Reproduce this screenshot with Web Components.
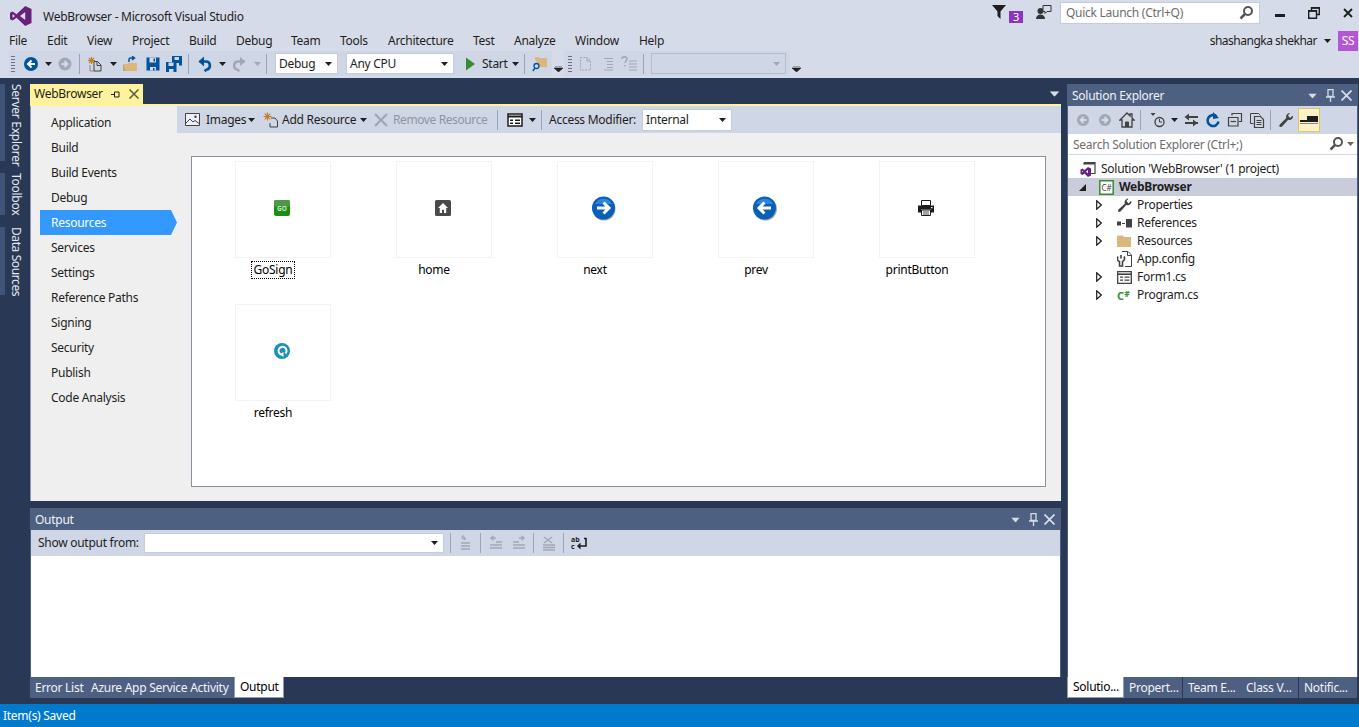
<!DOCTYPE html>
<html lang="en">
<head>
<meta charset="utf-8">
<title>WebBrowser - Microsoft Visual Studio</title>
<style>
html, body { margin: 0; padding: 0; height: 100%; overflow: hidden; }
body { font: 12px/16px "Noto Sans", "Open Sans", sans-serif; letter-spacing: -0.27px; color: #1e1e1e; background: #293955; }
</style>
</head>
<body>
<vs-app></vs-app>
<script>
// [width, height, svg content]
const ICONS = {
  caret: [7, 4, '<path d="M0 0h7L3.5 4z" fill="currentColor"/>'],
  logo: [22, 20, '<path fill-rule="evenodd" fill="#68217a" d="M15.2 0 21.5 3v14l-6.300 3-8.700-8.300L2.600 14.600 0 13.300V6.700l2.600-1.300 3.900 2.900zM2.600 7.900v4.200L5 10zM15.200 6 10 10l5.200 4z"/>'],
  filter: [14, 14, '<path d="M0 0h14L8.500 6.500V14L5.500 11V6.500z" fill="#1e1e1e"/>'],
  feedback: [16, 16, '<circle cx="4.500" cy="7" r="3" fill="#333"/><path d="M0 15c0-3 2-4.500 4.500-4.500S9 12 9 15z" fill="#333"/><path d="M7 1.500h8v6h-4l-2 2v-2H7z" fill="#d6dbe9" stroke="#333"/>'],
  search: [16, 16, '<circle cx="10" cy="6" r="4" fill="none" stroke="#555" stroke-width="2"/><path d="M7 9 2.500 13.500" stroke="#555" stroke-width="2.500"/>'],
  min: [10, 10, '<path d="M0 6h10v3H0z" fill="#1e1e1e"/>'],
  restore: [12, 12, '<path d="M3.500 3V.7h7.800v6.800H8.500M.7 3.700h7.800v7.600H.7z" fill="none" stroke="#1e1e1e" stroke-width="1.400"/><path d="M3.500 1h8M1 4h7" stroke="#1e1e1e" stroke-width="1.400"/>'],
  close: [10, 10, '<path d="M1 1l8 8M9 1 1 9" stroke="#1e1e1e" stroke-width="1.800"/>'],
  back: [16, 16, '<circle cx="8" cy="8" r="7" fill="#00539c"/><path d="M12 8H5.500M8.500 4.500 5 8l3.500 3.500" fill="none" stroke="#fff" stroke-width="2"/>'],
  forward: [16, 16, '<circle cx="8" cy="8" r="6.500" fill="#a3a8b4"/><path d="M4.500 8H10M7.500 5 10.500 8 7.500 11" fill="none" stroke="#d6dbe9" stroke-width="1.800"/>'],
  backoff: [16, 16, '<circle cx="8" cy="8" r="6" fill="#a3a8b4"/><path d="M11.500 8H6M8.500 5 5.500 8l3 3" fill="none" stroke="#d6dbe9" stroke-width="1.800"/>'],
  forwardoff: [16, 16, '<circle cx="8" cy="8" r="6" fill="#a3a8b4"/><path d="M4.500 8H10M7.500 5 10.500 8 7.500 11" fill="none" stroke="#d6dbe9" stroke-width="1.800"/>'],
  newproj: [16, 16, '<path d="M7 5.500h3.500L14 9v6H7z" fill="none" stroke="#424242"/><path d="M10 6v3.500h4" fill="none" stroke="#424242"/><path d="M4.500 1v7M1 4.500h7M2 2l5 5M7 2 2 7" stroke="#c27d1a" stroke-width="1.100"/><path d="M3 9.500v5.500h4" fill="none" stroke="#424242" stroke-dasharray="1 1"/>'],
  open: [16, 16, '<path d="M1 8h4l1-1h9v8H3z" fill="#dcb67a"/><path d="M1 8v7h3" fill="#c9a565"/><path d="M7 6V3.500c0-1 .6-1.500 1.600-1.500H12M10 .2 12.500 2 10 4" fill="none" stroke="#00539c" stroke-width="1.500"/>'],
  save: [16, 16, '<path d="M1.500 1.500h13v13h-13z" fill="#00539c"/><path d="M4.500 1.500h6.500v5H4.500zM5 11h6v3.500H5z" fill="#d6dbe9"/><path d="M8.500 2.500h1.500v3H8.500zM8 12h1.500v2.500H8z" fill="#00539c"/>'],
  saveall: [16, 16, '<path d="M6 0h10v9.500H13V7H6z" fill="#00539c"/><path d="M8.500 1h4.500v3H8.500z" fill="#cfd6e5"/><path d="M0 6h10.500v10H0z" fill="#00539c"/><path d="M2.500 6.500h5v3.500h-5zM3 13h4.500v3H3z" fill="#cfd6e5"/>'],
  undo: [16, 16, '<path d="M2.500 5.500H9c5 0 5 7 1 8l-2.500 1.500" fill="none" stroke="#00539c" stroke-width="2.600"/><path d="M7 .5 1.500 5.500 7 10.500z" fill="#00539c"/>'],
  redo: [16, 16, '<path d="M13.500 5.500H7c-5 0-5 7-1 8l2.500 1.500" fill="none" stroke="#a3a8b4" stroke-width="2.400"/><path d="M9 1l5.500 4.500L9 10z" fill="#a3a8b4"/>'],
  play: [16, 16, '<path d="M4 1.500l9 6.500-9 6.500z" fill="#388a34"/>'],
  find: [16, 16, '<path d="M3 4V1h3.500l1 1H15v9H6c0-4-1-6-3-7z" fill="#dcb67a"/><circle cx="4.500" cy="10" r="2.500" fill="#cfd6e5" stroke="#00539c" stroke-width="1.300"/><path d="M3 12 .8 15" stroke="#00539c" stroke-width="1.500"/>'],
  doc: [16, 16, '<path d="M3.500 1.500h7l3 3v9.500h-10z" fill="none" stroke="#a3a8b4" stroke-dasharray="2 1"/><path d="M10 2v3h3" fill="none" stroke="#a3a8b4"/>'],
  outdent: [16, 16, '<path d="M5 2.500h9M8 5.500h6M8 8.500h6M8 11.500h6M5 14h9" stroke="#a3a8b4" stroke-width="1.200"/>'],
  comment: [16, 16, '<path d="M1 3c0-3 5-3 5 0 0 2-2 2-2 4M4 9v1.500" fill="none" stroke="#a3a8b4" stroke-width="1.500"/><path d="M8 5h8M8 8h8M8 11h8M8 14h8" stroke="#a3a8b4" stroke-width="1.200"/>'],
  image: [16, 14, '<path d="M.5.500h14v12H.5z" fill="#eef0f6" stroke="#424242"/><path d="M1 10l4-4 3 3 2-1.500 4 3" fill="none" stroke="#424242"/><circle cx="10.500" cy="3.800" r="1.200" fill="#424242"/>'],
  addres: [16, 16, '<path d="M8 6h4l2.500 3v6H7v-4" fill="none" stroke="#424242"/><path d="M4.500 .5v8M.5 4.500h8M1.700 1.700l5.600 5.600M7.300 1.700 1.700 7.300" stroke="#c27d1a" stroke-width="1.100"/>'],
  xoff: [14, 14, '<path d="M1 1l12 12M13 1 1 13" stroke="#a3a8b4" stroke-width="2.400"/>'],
  views: [16, 14, '<path d="M1 1h14v12H1z" fill="#fff" stroke="#1e1e1e" stroke-width="1.500"/><path d="M1 3.500h14" stroke="#1e1e1e" stroke-width="2"/><path d="M3 6.500h3v1.500H3zM3 9.500h3V11H3zM8 6.500h5v1.500H8zM8 9.500h5V11H8z" fill="#1e1e1e"/>'],
  pin: [9, 9, '<path d="M0 4.500h3M3.500 2v5h4.500V2zM3.500 3v3" fill="none" stroke="#1e1e1e"/>'],
  tabclose: [10, 10, '<path d="M.5.500l9 9M9.500.500l-9 9" stroke="#5a5a3c" stroke-width="1.500"/>'],
  wcaret: [11, 6, '<path d="M0 0h11L5.500 6z" fill="#d6dbe9"/>'],
  wpin: [9, 13, '<path d="M2 .5h5v7H2zM0 8h9M4.500 8v5" fill="none" stroke="#d6dbe9" stroke-width="1.300"/>'],
  wclose: [11, 11, '<path d="M.5.500l10 10M10.500.500l-10 10" stroke="#d6dbe9" stroke-width="1.800"/>'],
  home: [16, 16, '<path d="M8 1 1 8h2v7h10V8h2l-2-2V2h-2v2z" fill="none" stroke="#424242" stroke-width="1.300"/><path d="M6.500 15v-5h3v5" fill="#424242" stroke="#424242"/>'],
  clock: [16, 16, '<circle cx="9.500" cy="10" r="4.500" fill="none" stroke="#424242" stroke-width="1.300"/><path d="M9.500 7v3h2.500" fill="none" stroke="#424242"/><path d="M.5 1h5L3 4z" fill="#424242"/>'],
  sync: [16, 16, '<path d="M15 5H5M15 11H2" stroke="#424242" stroke-width="1.800"/><path d="M6 1.500 1.500 5 6 8.500zM10 7.500 14.500 11 10 14.500z" fill="#424242"/>'],
  refresh: [16, 16, '<path d="M11.500 4.200A5.500 5.500 0 1 0 13.500 9.500" fill="none" stroke="#00539c" stroke-width="2.600"/><path d="M8 0v7l6-1z" fill="#00539c"/>'],
  collapse: [16, 16, '<path d="M5 3.500V1.500h9.500v8H12M1.500 5.500h9.500v8.500H1.500z" fill="none" stroke="#424242" stroke-width="1.200"/><path d="M3.500 9.500h5.500" stroke="#424242" stroke-width="1.200"/>'],
  copies: [16, 16, '<path d="M1.500 1.500h8l2 2M1.500 1.500v10h3" fill="none" stroke="#424242"/><path d="M5.500 4.500h6l3 3v8h-9z" fill="none" stroke="#424242" stroke-width="1.200"/><path d="M7.500 8.500h5M7.500 10.500h5M7.500 12.500h5" stroke="#424242"/>'],
  wrench: [16, 16, '<path d="M15 4.500c0 2.500-2.500 4-4.800 3.200L4 14.500c-2 1.500-3.500-.5-2.200-2L8.300 6C7.500 3.500 9.500 1 12 1l-2 2.500L12 6l2.500-2.200z" fill="#424242"/>'],
  pane: [18, 8, '<path d="M7 0h11v6H7zM0 4h7v2H0z" fill="#1e1e1e"/><path d="M0 7h18v1H0z" fill="#888"/>'],
  solution: [16, 16, '<path d="M4 1.500h11v11h-4M4 1.500v2" fill="none" stroke="#424242" stroke-width="1.200"/><path d="M4 1.500h11v2H4z" fill="#424242"/><path fill-rule="evenodd" fill="#68217a" d="M8 6l3 1.500v7L8 16l-3.500-3.500L2.500 14 .5 13V8.500l2-1 2 1.500zM2.300 9.500v2l1-1zM8 9 6 10.500 8 12.500z"/>'],
  csproj: [15, 15, '<path d="M.8.800h13.400v13.400H.8z" fill="#fff" stroke="#388a34" stroke-width="1.500"/><text x="7.500" y="10.500" text-anchor="middle" font-size="8" font-weight="400" letter-spacing="0" fill="#424242">C#</text>'],
  treeprops: [15, 15, '<path d="M14.500 3.500c0 3-3 4.500-5.300 3.500L3.500 13.500c-1.800 1.300-3.200-.3-2-2L7.800 5.800C7 3 9 .5 11.500.5L9.500 3l2 2.500L14 3z" fill="#424242"/>'],
  refs: [15, 9, '<path d="M0 2.500h4v4H0zM9 0h6v8.500H9z" fill="#424242"/><path d="M5 4.500h3" stroke="#424242"/>'],
  folder: [14, 12, '<path d="M0 1.500 1 .5h5l1 1.500h7v10H0z" fill="#dcb67a"/>'],
  config: [15, 16, '<path d="M5 .5h6l3.500 3.500v11.500H8" fill="none" stroke="#424242"/><path d="M10.500 1v3.500H14" fill="none" stroke="#424242"/><path d="M4 4v3.500M1 5.500c-1.500 3 .5 5 1.500 5V15h3v-4.500c1-.3 3-2.500 1.500-5" fill="none" stroke="#424242" stroke-width="1.600"/>'],
  form: [15, 13, '<path d="M.7.700h13.600v11.600H.7z" fill="#fff" stroke="#424242" stroke-width="1.300"/><path d="M1 3.200h13" stroke="#424242" stroke-width="1.600"/><path d="M3 5.500h3v1.300H3zM3 8.500h3v1.300H3zM7.500 5.500h5v1.300h-5zM7.500 8.500h5v1.300h-5z" fill="#424242"/>'],
  cs: [15, 14, '<text x="0" y="12" font-size="11" font-weight="700" letter-spacing="0" fill="#388a34">C</text><text x="7.500" y="9" font-size="8" font-weight="700" letter-spacing="0" fill="#388a34">#</text>'],
  arrowopen: [7, 7, '<path d="M7 0v7H0z" fill="#1e1e1e"/>'],
  arrowclosed: [6, 10, '<path d="M.7.800 5.300 5 .7 9.200z" fill="#fff" stroke="#1e1e1e" stroke-width="1.200"/>'],
  overflow: [9, 6, '<path d="M1 0h7M0 2h9l-4.500 4z" fill="#1e1e1e" stroke="#1e1e1e" stroke-width=".6"/>'],
  clearfind: [16, 16, '<path d="M6 1c-3 0-2 3 0 3h2M7 2 5 4M3 8h9M3 11h9M3 14h9" fill="none" stroke="#a3a8b4" stroke-width="1.400"/>'],
  prevmsg: [16, 16, '<path d="M8 3H3M5.500 .8 3 3l2.500 2.200M8 7h6M2 10h12M2 13h12" fill="none" stroke="#a3a8b4" stroke-width="1.400"/>'],
  nextmsg: [16, 16, '<path d="M8 3h5M10.500 .8 13 3l-2.500 2.200M2 7h6M2 10h12M2 13h12" fill="none" stroke="#a3a8b4" stroke-width="1.400"/>'],
  clearall: [16, 16, '<path d="M3 2l8 6M11 2 3 8M2 10h12M2 12.500h12M2 15h12" stroke="#a3a8b4" stroke-width="1.400"/>'],
  wrap: [16, 16, '<text x="0" y="7" font-size="7" font-weight="700" letter-spacing="0" fill="#1e1e1e">ab</text><text x="0" y="14" font-size="7" font-weight="700" letter-spacing="0" fill="#1e1e1e">c</text><path d="M13 3.500h2v7.500H8" fill="none" stroke="#1e1e1e" stroke-width="1.600"/><path d="M9.500 7.500 6 11l3.500 3.500z" fill="#1e1e1e"/>'],
  go: [16, 16, '<rect width="16" height="16" rx="2" fill="#1e8e12"/><rect width="16" height="7" rx="2" fill="#4c9a43"/><text x="8" y="10.500" text-anchor="middle" font-size="6.500" font-weight="700" letter-spacing="0" fill="#cfe8cc">GO</text>'],
  reshome: [16, 16, '<rect width="16" height="16" rx="1.500" fill="#4a4a4a"/><path d="M8 3 3 8h1.800v5h2.200V9.800h2V13h2.200V8H13z" fill="#fff"/>'],
  resnext: [24, 25, '<circle cx="12" cy="13" r="11.500" fill="#666" opacity=".55"/><circle cx="11.500" cy="12" r="11.500" fill="#0a5fb8"/><path d="M3 8a9.500 9.500 0 0 1 17 0z" fill="#2d87dc"/><path d="M5 12h12M11.500 6.500 17 12l-5.500 5.500" fill="none" stroke="#fff" stroke-width="3"/>'],
  resprev: [24, 25, '<circle cx="12.500" cy="13" r="11.500" fill="#666" opacity=".55"/><circle cx="11.500" cy="12" r="11.500" fill="#0a5fb8"/><path d="M3 8a9.500 9.500 0 0 1 17 0z" fill="#2d87dc"/><path d="M18 12H6M11.500 6.500 6 12l5.500 5.500" fill="none" stroke="#fff" stroke-width="3"/>'],
  resprint: [16, 16, '<path d="M3.500 .5h9v5h-9z" fill="#fff" stroke="#1a1a1a"/><path d="M0 5.500h16v7h-3v-3H3v3H0z" fill="#1a1a1a"/><path d="M3.500 10h9v5.500h-9z" fill="#fff" stroke="#1a1a1a"/><path d="M5 12h6M5 14h6" stroke="#1a1a1a" stroke-width=".8"/><path d="M13 7h1.500v1.200H13z" fill="#fff"/>'],
  resrefresh: [16, 16, '<circle cx="8" cy="8" r="8" fill="#1a8fb8"/><path d="M11.500 10.500A4 4 0 1 0 7 11.500" fill="none" stroke="#fff" stroke-width="2"/><path d="M9.500 9v5l-4-2.500z" fill="#fff"/>']
};

class VsIcon extends HTMLElement {
  constructor() {
    super();
    const [w, h, body] = ICONS[this.getAttribute('name')];
    this.attachShadow({ mode: 'open' }).innerHTML =
      `<style>:host{display:inline-flex;flex:none;align-items:center;justify-content:center}svg{display:block}</style>
       <svg width="${w}" height="${h}" viewBox="0 0 ${w} ${h}">${body}</svg>`;
  }
}
customElements.define('vs-icon', VsIcon);

class VsCombo extends HTMLElement {
  constructor() {
    super();
    const disabled = this.hasAttribute('disabled');
    this.attachShadow({ mode: 'open' }).innerHTML = `
      <style>
      :host{display:flex;flex:none;align-items:center;box-sizing:border-box;height:21px;padding:0 5px 0 3px;
        background:${disabled ? '#cfd6e5' : '#fff'};border:1px solid ${disabled ? '#b4bccd' : '#c3cbdc'};
        color:${disabled ? '#a3a8b4' : '#1e1e1e'}}
      span{flex:1;white-space:nowrap}
      </style>
      <span><slot></slot></span><vs-icon name="caret"></vs-icon>`;
  }
}
customElements.define('vs-combo', VsCombo);

const BAR_CSS = `
  .sep{flex:none;width:1px;align-self:center;height:20px;background:#9aa2b5}
  .grip{flex:none;width:4px;height:17px;background-image:radial-gradient(#6a7389 .7px,transparent .8px);background-size:2px 3px}
  .off{color:#8f95a3;letter-spacing:-.4px}
  span{white-space:nowrap}
`;

class VsTitleBar extends HTMLElement {
  constructor() {
    super();
    this.attachShadow({ mode: 'open' }).innerHTML = `
      <style>
      :host{display:flex;align-items:center;height:30px;padding-left:10px;box-sizing:border-box}
      .name{margin-left:11px;flex:1;padding-top:4px}
      .badge{margin:3px 0 0 3px;width:14px;height:12px;background:#8a35c0;color:#fff;font-size:11px;line-height:12px;text-align:center}
      .quick{display:flex;align-items:center;box-sizing:border-box;width:200px;height:22px;margin:-5px 0 0 8px;padding:1px 5px 0;background:#fff;border:1px solid #c3cbdc;color:#6d6d6d}
      .quick span{flex:1}
      .btn{margin-top:-4px}
      </style>
      <vs-icon name="logo" style="margin-top:2px"></vs-icon>
      <span class="name">WebBrowser - Microsoft Visual Studio</span>
      <vs-icon name="filter" style="margin-top:-6px"></vs-icon>
      <span class="badge">3</span>
      <vs-icon name="feedback" style="margin:-6px 0 0 13px"></vs-icon>
      <div class="quick"><span>Quick Launch (Ctrl+Q)</span><vs-icon name="search"></vs-icon></div>
      <vs-icon class="btn" name="min" style="margin-left:15px"></vs-icon>
      <vs-icon class="btn" name="restore" style="margin-left:23px"></vs-icon>
      <vs-icon class="btn" name="close" style="margin:-4px 6px 0 23px"></vs-icon>`;
  }
}
customElements.define('vs-title-bar', VsTitleBar);

class VsMenuBar extends HTMLElement {
  constructor() {
    super();
    const items = ['File','Edit','View','Project','Build','Debug','Team','Tools','Architecture','Test','Analyze','Window','Help'];
    this.attachShadow({ mode: 'open' }).innerHTML = `
      <style>
      :host{display:flex;align-items:center;height:21px;box-sizing:border-box}
      .menu{display:grid;grid-template-columns:38px 40px 45px 57px 47px 55px 49px 48px 85px 41px 61px 64px 40px;padding-left:9px;flex:1}
      .user{margin-right:7px;letter-spacing:-.5px}
      .ss{width:20px;height:20px;margin:0 1px 0 7px;background:#b455d6;color:#fff;text-align:center;line-height:20px}
      </style>
      <div class="menu">${items.map(i => `<span>${i}</span>`).join('')}</div>
      <span class="user">shashangka shekhar</span><vs-icon name="caret"></vs-icon><span class="ss">SS</span>`;
  }
}
customElements.define('vs-menu-bar', VsMenuBar);

class VsMainToolbar extends HTMLElement {
  constructor() {
    super();
    this.attachShadow({ mode: 'open' }).innerHTML = `
      <style>
      ${BAR_CSS}
      :host{display:flex;height:27px;padding-left:9px}
      .bar{display:flex;align-items:center;height:25px;background:#cfd6e5;box-sizing:border-box}
      .over{display:flex;justify-content:center;align-items:flex-end;padding-bottom:5px;box-sizing:border-box;height:26px}
      </style>
      <div class="bar" style="width:543px">
        <i class="grip" style="margin-left:2px"></i>
        <vs-icon name="back" style="margin-left:8px"></vs-icon>
        <vs-icon name="caret" style="margin-left:6px"></vs-icon>
        <vs-icon name="forward" style="margin-left:5px"></vs-icon>
        <i class="sep" style="margin-left:6px"></i>
        <vs-icon name="newproj" style="margin-left:7px"></vs-icon>
        <vs-icon name="caret" style="margin-left:7px"></vs-icon>
        <vs-icon name="open" style="margin-left:5px"></vs-icon>
        <vs-icon name="save" style="margin-left:7px"></vs-icon>
        <vs-icon name="saveall" style="margin-left:5px"></vs-icon>
        <i class="sep" style="margin-left:6px"></i>
        <vs-icon name="undo" style="margin-left:8px"></vs-icon>
        <vs-icon name="caret" style="margin-left:6px"></vs-icon>
        <vs-icon name="redo" style="margin-left:5px"></vs-icon>
        <vs-icon name="caret" style="margin-left:7px;color:#a3a8b4"></vs-icon>
        <i class="sep" style="margin-left:5px"></i>
        <vs-combo style="margin-left:8px;width:63px">Debug</vs-combo>
        <vs-combo style="margin-left:8px;width:108px">Any CPU</vs-combo>
        <vs-icon name="play" style="margin-left:8px"></vs-icon>
        <span style="margin-left:4px;width:26px">Start</span>
        <vs-icon name="caret" style="margin-left:4px"></vs-icon>
        <i class="sep" style="margin-left:5px"></i>
        <vs-icon name="find" style="margin-left:7px"></vs-icon>
      </div>
      <div class="over" style="width:12px"><vs-icon name="overflow"></vs-icon></div>
      <div class="bar" style="width:226px">
        <i class="grip" style="margin-left:4px"></i>
        <vs-icon name="doc" style="margin-left:5px"></vs-icon>
        <vs-icon name="outdent" style="margin-left:6px"></vs-icon>
        <vs-icon name="comment" style="margin-left:6px"></vs-icon>
        <i class="sep" style="margin-left:6px"></i>
        <vs-combo disabled style="margin-left:7px;width:135px"></vs-combo>
      </div>
      <div class="over" style="width:12px"><vs-icon name="overflow"></vs-icon></div>`;
  }
}
customElements.define('vs-main-toolbar', VsMainToolbar);

class VsRail extends HTMLElement {
  constructor() {
    super();
    this.attachShadow({ mode: 'open' }).innerHTML = `
      <style>
      :host{display:flex;flex-direction:column;gap:12px;color:#e4e9f3}
      div{display:flex;writing-mode:vertical-rl;box-sizing:border-box;width:30px;padding:0 3px 0 5px;box-shadow:inset 5px 0 0 #3f5478;white-space:nowrap;line-height:22px}
      </style>
      <div style="height:77px">Server Explorer</div>
      <div style="height:42px">Toolbox</div>
      <div style="height:68px;letter-spacing:-.4px">Data Sources</div>`;
  }
}
customElements.define('vs-rail', VsRail);

class VsDocTab extends HTMLElement {
  constructor() {
    super();
    this.attachShadow({ mode: 'open' }).innerHTML = `
      <style>
      :host{display:flex;align-items:center;height:20px;border-bottom:2px solid #fff29d}
      .tab{display:flex;align-items:center;height:20px;width:113px;box-sizing:border-box;padding-left:4px;background:#fff29d;color:#1e1e1e}
      .tab span{width:76px;white-space:nowrap}
      .end{margin-left:auto;margin-right:1px}
      </style>
      <div class="tab"><span><slot></slot></span><vs-icon name="pin" style="margin-left:1px"></vs-icon><vs-icon name="tabclose" style="margin-left:9px"></vs-icon></div>
      <vs-icon class="end" name="wcaret" style="transform:scale(.9)"></vs-icon>`;
  }
}
customElements.define('vs-doc-tab', VsDocTab);

class VsNavItem extends HTMLElement {
  constructor() {
    super();
    this.attachShadow({ mode: 'open' }).innerHTML = `
      <style>
      :host{display:flex;align-items:center;height:25px;width:137px;box-sizing:border-box;padding:1px 0 0 11px}
      :host([active]){color:#fff;background:#3399ff;clip-path:polygon(0 0,131px 0,137px 50%,131px 100%,0 100%)}
      </style>
      <slot></slot>`;
  }
}
customElements.define('vs-nav-item', VsNavItem);

class VsNavList extends HTMLElement {
  constructor() {
    super();
    this.attachShadow({ mode: 'open' }).innerHTML = `
      <style>:host{display:block;box-sizing:border-box;padding:4px 0 0 10px}</style>
      <slot></slot>`;
  }
}
customElements.define('vs-nav-list', VsNavList);

class VsResToolbar extends HTMLElement {
  constructor() {
    super();
    this.attachShadow({ mode: 'open' }).innerHTML = `
      <style>
      ${BAR_CSS}
      :host{display:flex;align-items:center;height:27px;background:#cfd6e5}
      </style>
      <vs-icon name="image" style="margin-left:8px"></vs-icon>
      <span style="margin-left:5px;width:39px">Images</span>
      <vs-icon name="caret" style="margin-left:3px"></vs-icon>
      <vs-icon name="addres" style="margin-left:8px"></vs-icon>
      <span style="margin-left:3px;width:74px">Add Resource</span>
      <vs-icon name="caret" style="margin-left:4px"></vs-icon>
      <vs-icon name="xoff" style="margin-left:7px"></vs-icon>
      <span class="off" style="margin-left:5px;width:95px">Remove Resource</span>
      <i class="sep" style="margin-left:9px"></i>
      <vs-icon name="views" style="margin-left:9px"></vs-icon>
      <vs-icon name="caret" style="margin-left:6px"></vs-icon>
      <i class="sep" style="margin-left:5px"></i>
      <span style="margin-left:7px;width:88px">Access Modifier:</span>
      <vs-combo style="margin-left:5px;width:90px;height:22px">Internal</vs-combo>`;
  }
}
customElements.define('vs-res-toolbar', VsResToolbar);

class VsResItem extends HTMLElement {
  constructor() {
    super();
    const focus = this.hasAttribute('focused');
    this.attachShadow({ mode: 'open' }).innerHTML = `
      <style>
      :host{display:block;width:161px;height:143px;color:#000}
      .thumb{display:flex;align-items:center;justify-content:center;width:96px;height:97px;box-sizing:border-box;padding:0 3px 3px 0;border:1px solid #f3f3f3}
      .label{width:76px;margin-top:3px;text-align:center}
      .label span{display:inline-block;height:16px;padding:0 2px;line-height:16px;border:1px ${focus ? 'dotted #000' : 'solid transparent'}}
      </style>
      <div class="thumb"><vs-icon name="${this.getAttribute('icon')}"></vs-icon></div>
      <div class="label"><span><slot></slot></span></div>`;
  }
}
customElements.define('vs-res-item', VsResItem);

class VsResGrid extends HTMLElement {
  constructor() {
    super();
    this.attachShadow({ mode: 'open' }).innerHTML = `
      <style>
      :host{display:flex;flex-wrap:wrap;align-content:flex-start;box-sizing:border-box;margin:23px 15px 14px 14px;height:331px;padding:4px 0 0 43px;background:#fff;border:1px solid #8b8e9c}
      ::slotted(vs-res-item){flex:none}
      </style>
      <slot></slot>`;
  }
}
customElements.define('vs-res-grid', VsResGrid);

class VsResourceDesigner extends HTMLElement {
  constructor() {
    super();
    this.attachShadow({ mode: 'open' }).innerHTML = `
      <style>
      :host{display:grid;grid-template-columns:147px 884px;height:395px;background:#efefef;box-shadow:inset 1px 0 0 #8d9bb8}
      </style>
      <vs-nav-list>
        <vs-nav-item>Application</vs-nav-item>
        <vs-nav-item>Build</vs-nav-item>
        <vs-nav-item>Build Events</vs-nav-item>
        <vs-nav-item>Debug</vs-nav-item>
        <vs-nav-item active>Resources</vs-nav-item>
        <vs-nav-item>Services</vs-nav-item>
        <vs-nav-item>Settings</vs-nav-item>
        <vs-nav-item>Reference Paths</vs-nav-item>
        <vs-nav-item>Signing</vs-nav-item>
        <vs-nav-item>Security</vs-nav-item>
        <vs-nav-item>Publish</vs-nav-item>
        <vs-nav-item>Code Analysis</vs-nav-item>
      </vs-nav-list>
      <div>
        <vs-res-toolbar></vs-res-toolbar>
        <vs-res-grid>
          <vs-res-item icon="go" focused>GoSign</vs-res-item>
          <vs-res-item icon="reshome">home</vs-res-item>
          <vs-res-item icon="resnext">next</vs-res-item>
          <vs-res-item icon="resprev">prev</vs-res-item>
          <vs-res-item icon="resprint">printButton</vs-res-item>
          <vs-res-item icon="resrefresh">refresh</vs-res-item>
        </vs-res-grid>
      </div>`;
  }
}
customElements.define('vs-resource-designer', VsResourceDesigner);

// docked pane: title bar, then whatever is passed in
class VsToolWindow extends HTMLElement {
  constructor() {
    super();
    this.attachShadow({ mode: 'open' }).innerHTML = `
      <style>
      :host{display:flex;flex-direction:column;box-sizing:border-box;border:1px solid #4d6082;border-bottom:0;background:#fff;min-height:0}
      .head{display:flex;align-items:center;flex:none;height:21px;padding:0 5px 0 4px;background:#4d6082;color:#f0f3f8}
      .head span{flex:1}
      .body{flex:1;display:flex;flex-direction:column;min-height:0}
      </style>
      <div class="head"><span>${this.getAttribute('heading')}</span>
        <vs-icon name="wcaret" style="transform:scale(.8)"></vs-icon>
        <vs-icon name="wpin" style="margin-left:8px"></vs-icon>
        <vs-icon name="wclose" style="margin-left:6px"></vs-icon></div>
      <div class="body"><slot></slot></div>`;
  }
}
customElements.define('vs-tool-window', VsToolWindow);

class VsOutputBar extends HTMLElement {
  constructor() {
    super();
    this.attachShadow({ mode: 'open' }).innerHTML = `
      <style>
      ${BAR_CSS}
      :host{display:flex;align-items:center;flex:none;height:26px;background:#cfd6e5}
      </style>
      <span style="margin-left:7px;width:100px">Show output from:</span>
      <vs-combo style="margin-left:6px;width:300px;height:20px"></vs-combo>
      <i class="sep" style="margin-left:6px"></i>
      <vs-icon name="clearfind" style="margin-left:7px"></vs-icon>
      <i class="sep" style="margin-left:6px"></i>
      <vs-icon name="prevmsg" style="margin-left:7px"></vs-icon>
      <vs-icon name="nextmsg" style="margin-left:7px"></vs-icon>
      <i class="sep" style="margin-left:6px"></i>
      <vs-icon name="clearall" style="margin-left:7px"></vs-icon>
      <i class="sep" style="margin-left:6px"></i>
      <vs-icon name="wrap" style="margin-left:7px"></vs-icon>`;
  }
}
customElements.define('vs-output-bar', VsOutputBar);

class VsTabStrip extends HTMLElement {
  constructor() {
    super();
    this.attachShadow({ mode: 'open' }).innerHTML = `
      <style>
      :host{display:flex;flex:none;height:21px}
      ::slotted(*){display:flex;align-items:center;box-sizing:border-box;height:21px;background:#4d6082;color:#f0f3f8;white-space:nowrap}
      ::slotted([selected]){background:#fff;color:#000;border:1px solid #8d9bb8;border-top:0}
      </style>
      <slot></slot>`;
  }
}
customElements.define('vs-tab-strip', VsTabStrip);

class VsSolutionBar extends HTMLElement {
  constructor() {
    super();
    this.attachShadow({ mode: 'open' }).innerHTML = `
      <style>
      ${BAR_CSS}
      :host{display:flex;align-items:center;flex:none;height:28px;background:#cfd6e5}
      .on{display:flex;align-items:center;justify-content:center;box-sizing:border-box;width:22px;height:24px;margin-left:4px;background:#fff2c8;border:1px solid #e5c365}
      </style>
      <vs-icon name="backoff" style="margin-left:7px"></vs-icon>
      <vs-icon name="forwardoff" style="margin-left:6px"></vs-icon>
      <vs-icon name="home" style="margin-left:6px"></vs-icon>
      <i class="sep" style="margin-left:5px"></i>
      <vs-icon name="clock" style="margin-left:9px"></vs-icon>
      <vs-icon name="caret" style="margin-left:5px"></vs-icon>
      <vs-icon name="sync" style="margin-left:5px"></vs-icon>
      <vs-icon name="refresh" style="margin-left:6px"></vs-icon>
      <vs-icon name="collapse" style="margin-left:6px"></vs-icon>
      <vs-icon name="copies" style="margin-left:6px"></vs-icon>
      <i class="sep" style="margin-left:5px"></i>
      <vs-icon name="wrench" style="margin-left:7px"></vs-icon>
      <div class="on"><vs-icon name="pane"></vs-icon></div>`;
  }
}
customElements.define('vs-solution-bar', VsSolutionBar);

class VsSearchBox extends HTMLElement {
  constructor() {
    super();
    this.attachShadow({ mode: 'open' }).innerHTML = `
      <style>
      :host{display:flex;align-items:center;flex:none;height:20px;margin:0 0 1px 1px;padding:0 3px 0 4px;background:#fff;border-bottom:1px solid #cfd6e5;color:#6d6d6d}
      span{flex:1;padding-top:1px}
      </style>
      <span><slot></slot></span><vs-icon name="search"></vs-icon><vs-icon name="caret" style="margin-left:3px;color:#666"></vs-icon>`;
  }
}
customElements.define('vs-search-box', VsSearchBox);

class VsTreeRow extends HTMLElement {
  constructor() {
    super();
    const arrow = this.getAttribute('arrow');
    this.attachShadow({ mode: 'open' }).innerHTML = `
      <style>
      :host{display:grid;grid-template-columns:var(--arrow-w,25px) 16px auto;align-items:center;height:18px;padding-left:var(--indent,23px);white-space:nowrap}
      :host([selected]){background:#c9cddb;font-weight:700;color:#1e1e1e}
      .a{display:flex;justify-content:center;width:16px}
      vs-icon{justify-self:center}
      span{margin-left:5px}
      </style>
      <div class="a">${arrow ? `<vs-icon name="${arrow}"></vs-icon>` : ''}</div>
      <vs-icon name="${this.getAttribute('icon')}"></vs-icon>
      <span><slot></slot></span>`;
  }
}
customElements.define('vs-tree-row', VsTreeRow);

class VsStatusBar extends HTMLElement {
  constructor() {
    super();
    this.attachShadow({ mode: 'open' }).innerHTML = `
      <style>:host{display:flex;align-items:center;height:23px;padding-left:3px;background:#007acc;color:#fff}</style>
      <slot></slot>`;
  }
}
customElements.define('vs-status-bar', VsStatusBar);

class VsApp extends HTMLElement {
  constructor() {
    super();
    this.attachShadow({ mode: 'open' }).innerHTML = `
      <style>
      :host{display:grid;grid-template-rows:78px 626px 23px;grid-template-columns:1359px;height:727px;width:1359px;overflow:hidden;background:#293955}
      header{background:#d6dbe9}
      main{display:grid;grid-template-columns:30px 1031px 298px;padding-top:6px;box-sizing:border-box;height:626px}
      .center{display:flex;flex-direction:column}
      .side{display:flex;flex-direction:column;height:614px;margin:0 1px 0 6px}
      .tree{flex:1;padding-top:4px;background:#fff}
      vs-tool-window.out{height:169px;margin-top:7px}
      .white{flex:1;background:#fff}
      .t{padding-left:5px;padding-right:5px}
      </style>
      <header>
        <vs-title-bar></vs-title-bar>
        <vs-menu-bar></vs-menu-bar>
        <vs-main-toolbar></vs-main-toolbar>
      </header>
      <main>
        <vs-rail></vs-rail>
        <div class="center">
          <vs-doc-tab>WebBrowser</vs-doc-tab>
          <vs-resource-designer></vs-resource-designer>
          <vs-tool-window class="out" heading="Output">
            <vs-output-bar></vs-output-bar>
            <div class="white"></div>
          </vs-tool-window>
          <vs-tab-strip>
            <div class="t" style="width:56px">Error List</div>
            <div class="t" style="width:148px;padding-left:5px">Azure App Service Activity</div>
            <div class="t" selected style="width:50px">Output</div>
          </vs-tab-strip>
        </div>
        <div class="side">
          <vs-tool-window heading="Solution Explorer" style="flex:1">
            <vs-solution-bar></vs-solution-bar>
            <vs-search-box>Search Solution Explorer (Ctrl+;)</vs-search-box>
            <div class="tree">
              <vs-tree-row icon="solution" style="--indent:0;--arrow-w:12px">Solution 'WebBrowser' (1 project)</vs-tree-row>
              <vs-tree-row icon="csproj" arrow="arrowopen" selected style="--indent:6px;--arrow-w:24px">WebBrowser</vs-tree-row>
              <vs-tree-row icon="treeprops" arrow="arrowclosed">Properties</vs-tree-row>
              <vs-tree-row icon="refs" arrow="arrowclosed">References</vs-tree-row>
              <vs-tree-row icon="folder" arrow="arrowclosed">Resources</vs-tree-row>
              <vs-tree-row icon="config">App.config</vs-tree-row>
              <vs-tree-row icon="form" arrow="arrowclosed">Form1.cs</vs-tree-row>
              <vs-tree-row icon="cs" arrow="arrowclosed">Program.cs</vs-tree-row>
            </div>
          </vs-tool-window>
          <vs-tab-strip>
            <div class="t" selected style="width:57px">Solutio...</div>
            <div class="t" style="width:59px;border-right:1px solid #293955">Propert...</div>
            <div class="t" style="width:58px">Team E...</div>
            <div class="t" style="width:58px;border-right:1px solid #293955">Class V...</div>
            <div class="t" style="width:58px">Notific...</div>
          </vs-tab-strip>
        </div>
      </main>
      <vs-status-bar>Item(s) Saved</vs-status-bar>`;
  }
}
customElements.define('vs-app', VsApp);
</script>
</body>
</html>
